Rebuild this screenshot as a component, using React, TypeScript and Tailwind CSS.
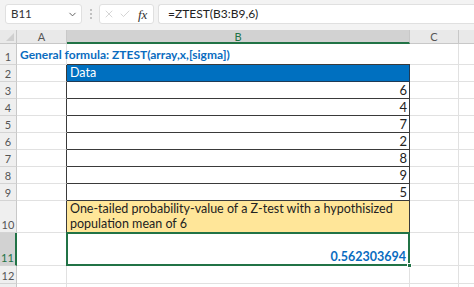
import { ChevronDown, X, Check } from "lucide-react";

const rows = [
  { n: 1, h: "h-[21px]" },
  { n: 2, h: "h-[17px]" },
  { n: 3, h: "h-[17px]", v: "6" },
  { n: 4, h: "h-[17px]", v: "4" },
  { n: 5, h: "h-[17px]", v: "7" },
  { n: 6, h: "h-[17px]", v: "2" },
  { n: 7, h: "h-[17px]", v: "8" },
  { n: 8, h: "h-[17px]", v: "9" },
  { n: 9, h: "h-[17px]", v: "5" },
  { n: 10, h: "h-[32px]" },
  { n: 11, h: "h-[33px]" },
  { n: 12, h: "h-[18px]" },
  { n: 13, h: "h-[18px]" },
];

function RowCells({ n, h, v }: { n: number; h: string; v?: string }) {
  const inTable = n >= 2 && n <= 10;
  const selected = n === 11;

  return (
    <div className={`flex ${h}`}>
      {/* row header */}
      <div
        className={`w-[17px] shrink-0 flex items-end justify-center pb-[2px] border-b border-[#d4d4d4] text-[11px] leading-none ${
          selected
            ? "bg-[#d2d2d2] border-r-2 border-r-[#217346] text-[#217346]"
            : "bg-[#efefef] border-r border-r-[#c8c8c8] text-[#555]"
        }`}
      >
        {n < 13 ? n : ""}
      </div>

      {/* A */}
      <div
        className={`w-[50px] shrink-0 relative border-b border-[#e1e1e1] ${
          inTable ? "border-r border-r-[#3a3a3a]" : "border-r border-r-[#e1e1e1]"
        }`}
      >
        {n === 1 && (
          <span className="absolute left-[3px] bottom-[3px] whitespace-nowrap text-[12px] font-bold text-[#0a6cbf] leading-none">
            General formula: ZTEST(array,x,[sigma])
          </span>
        )}
      </div>

      {/* B */}
      {n === 1 && <div className="w-[343px] shrink-0 border-b border-[#3a3a3a]" />}
      {n === 2 && (
        <div className="w-[343px] shrink-0 bg-[#0070c0] border-r border-b border-[#1f3a55] text-white text-[12.5px] leading-none flex items-end px-[3px] pb-[2px]">
          Data
        </div>
      )}
      {v && (
        <div className="w-[343px] shrink-0 border-r border-b border-[#3a3a3a] text-[#222] text-[13px] leading-none flex items-end justify-end px-[2px] pb-[1px]">
          {v}
        </div>
      )}
      {n === 10 && (
        <div className="w-[343px] shrink-0 overflow-hidden whitespace-nowrap bg-[#ffe699] border-r border-b border-[#3a3a3a] text-[#222] text-[12.5px] leading-[15px] px-[3px] pb-[1px] flex flex-col justify-end">
          <span>One-tailed probability-value of a Z-test with a hypothisized</span>
          <span>population mean of 6</span>
        </div>
      )}
      {n === 11 && (
        <div className="w-[343px] shrink-0 relative border-r border-b border-[#e1e1e1] flex items-end justify-end px-[3px] pb-[2px]">
          <div className="absolute -left-px -top-px right-[-1px] bottom-[-1px] border-2 border-[#217346]" />
          <div className="absolute right-[-3px] bottom-[-3px] w-[5px] h-[5px] bg-[#217346] border border-white" />
          <span className="text-[12.5px] font-bold text-[#0a6cbf] leading-none">0.562303694</span>
        </div>
      )}
      {n >= 12 && <div className="w-[343px] shrink-0 border-r border-b border-[#e1e1e1]" />}

      {/* C */}
      <div className="w-[49px] shrink-0 border-r border-b border-[#e1e1e1]" />
      {/* D */}
      <div className="flex-1 border-b border-[#e1e1e1]" />
    </div>
  );
}

export default function App() {
  return (
    <div
      className="w-[474px] h-[287px] overflow-hidden bg-white text-[#222]"
      style={{ fontFamily: "Lato, 'Open Sans', sans-serif" }}
    >
      {/* Formula bar */}
      <div className="h-[30px] bg-[#f3f3f3] flex items-start pt-[4px] pl-[5px]">
        <div className="w-[77px] h-[20px] bg-white border border-[#e0e0e0] rounded-[3px] flex items-center justify-between pl-[5px] pr-[3px]">
          <span className="text-[11.5px] text-[#333]">B11</span>
          <ChevronDown size={11} strokeWidth={2} className="text-[#555]" />
        </div>
        <div className="w-[17px] h-[20px] flex flex-col items-center justify-center gap-[2px]">
          <span className="w-[2px] h-[2px] rounded-full bg-[#b0b0b0]" />
          <span className="w-[2px] h-[2px] rounded-full bg-[#b0b0b0]" />
          <span className="w-[2px] h-[2px] rounded-full bg-[#b0b0b0]" />
        </div>
        <div className="w-[55px] h-[20px] bg-white border border-[#e0e0e0] rounded-[3px] flex items-center pl-[3px] gap-[4px]">
          <X size={12} strokeWidth={1.2} className="text-[#b8b8b8]" />
          <Check size={12} strokeWidth={1.2} className="text-[#b8b8b8]" />
          <span
            className="text-[13px] italic text-[#333] leading-none ml-[3px]"
            style={{ fontFamily: "'Liberation Serif', serif" }}
          >
            fx
          </span>
        </div>
        <div className="flex-1 ml-[4px] h-[20px] bg-white border-y border-l border-[#e0e0e0] rounded-l-[3px] flex items-center pl-[9px]">
          <span className="text-[12px] text-[#222]">=ZTEST(B3:B9,6)</span>
        </div>
      </div>

      {/* Column headers */}
      <div className="flex h-[14px] text-[11px] leading-none text-[#555]">
        <div className="w-[17px] shrink-0 bg-[#e9e9e9] border-r border-b border-[#c8c8c8] relative">
          <div className="absolute right-[2px] bottom-[2px] w-0 h-0 border-l-[8px] border-l-transparent border-b-[8px] border-b-[#cfcfcf]" />
        </div>
        <div className="w-[50px] shrink-0 bg-[#e9e9e9] border-r border-b border-[#c8c8c8] flex items-center justify-center">
          A
        </div>
        <div className="w-[343px] shrink-0 bg-[#d2d2d2] border-r border-r-[#c8c8c8] border-b-2 border-b-[#217346] flex items-center justify-center text-[#217346]">
          B
        </div>
        <div className="w-[49px] shrink-0 bg-[#e9e9e9] border-r border-b border-[#c8c8c8] flex items-center justify-center">
          C
        </div>
        <div className="flex-1 bg-[#e9e9e9] border-b border-[#c8c8c8]" />
      </div>

      {rows.map((r) => (
        <RowCells key={r.n} {...r} />
      ))}
    </div>
  );
}
